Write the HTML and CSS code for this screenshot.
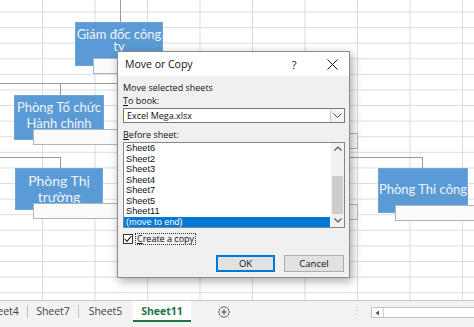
FILE: index.html
```html
<!DOCTYPE html>
<html lang="vi">
<head>
    <meta charset="UTF-8">
    <meta name="viewport" content="width=device-width, initial-scale=1.0">
    <title>Move or Copy</title>
    <link rel="stylesheet" href="styles.css">
</head>
<body>

<!-- Worksheet with the org chart -->
<div class="sheet">
    <div class="wire wire-top"></div>
    <div class="wire wire-row1"></div>
    <div class="wire wire-drop1"></div>
    <div class="wire wire-row2"></div>
    <div class="wire wire-drop2"></div>
    <div class="wire wire-row2-right"></div>
    <div class="wire wire-drop2-right"></div>

    <div class="node node-ceo">Giám đốc công ty</div>
    <div class="tag tag-ceo"></div>

    <div class="node node-admin">Phòng Tổ chức Hành chính</div>
    <div class="tag tag-admin"></div>

    <div class="node node-market">Phòng Thị trường</div>
    <div class="tag tag-market"></div>

    <div class="tag tag-mid1"></div>
    <div class="tag tag-mid2"></div>

    <div class="node node-build">Phòng Thi công</div>
    <div class="tag tag-build"></div>
</div>

<!-- Sheet tabs -->
<div class="tabbar">
    <div class="tab tab-cut">Sheet4</div>
    <span class="sep"></span>
    <div class="tab">Sheet7</div>
    <span class="sep"></span>
    <div class="tab tab-wide">Sheet5</div>
    <div class="tab tab-active">Sheet11</div>
    <div class="add-sheet">
        <svg width="12" height="12" viewBox="0 0 12 12">
            <circle cx="6" cy="6" r="5.2" fill="none" stroke="#666" stroke-width="1"/>
            <path d="M6 3.2v5.6M3.2 6h5.6" stroke="#555" stroke-width="1.2"/>
        </svg>
    </div>
    <div class="grip">&#8942;</div>
    <div class="hscroll">
        <span class="hscroll-arrow">
            <svg width="5" height="6" viewBox="0 0 5 6"><path d="M4 0.5L0.5 3L4 5.5z" fill="#555"/></svg>
        </span>
    </div>
</div>

<!-- Move or Copy dialog -->
<div class="dialog">
    <div class="dlg-title">
        <span class="dlg-caption">Move or Copy</span>
        <span class="dlg-help">?</span>
        <span class="dlg-close">
            <svg width="11" height="11" viewBox="0 0 11 11"><path d="M0.5 0.5L10.5 10.5M10.5 0.5L0.5 10.5" stroke="#111" stroke-width="1"/></svg>
        </span>
    </div>

    <div class="dlg-body">
        <div class="label">Move selected sheets</div>
        <div class="label"><u>T</u>o book:</div>
        <div class="combo">
            <span class="combo-text">Excel Mega.xlsx</span>
            <span class="combo-btn">
                <svg width="9" height="5" viewBox="0 0 9 5"><path d="M0.5 0.5L4.5 4.5L8.5 0.5" fill="none" stroke="#444" stroke-width="1"/></svg>
            </span>
        </div>
        <div class="label label-gap"><u>B</u>efore sheet:</div>
        <div class="listbox">
            <ul class="items">
                <li>Sheet6</li>
                <li>Sheet2</li>
                <li>Sheet3</li>
                <li>Sheet4</li>
                <li>Sheet7</li>
                <li>Sheet5</li>
                <li>Sheet11</li>
                <li class="selected">(move to end)</li>
            </ul>
            <div class="vscroll">
                <span class="vscroll-arrow">
                    <svg width="8" height="5" viewBox="0 0 8 5"><path d="M0.5 4.5L4 1L7.5 4.5" fill="none" stroke="#555" stroke-width="1.2"/></svg>
                </span>
                <span class="vscroll-thumb"></span>
                <span class="vscroll-arrow vscroll-down">
                    <svg width="8" height="5" viewBox="0 0 8 5"><path d="M0.5 0.5L4 4L7.5 0.5" fill="none" stroke="#555" stroke-width="1.2"/></svg>
                </span>
            </div>
        </div>
        <div class="check-row">
            <span class="checkbox">
                <svg width="8" height="8" viewBox="0 0 8 8"><path d="M0.8 4.2L3 6.4L7.3 1.2" fill="none" stroke="#222" stroke-width="1.1"/></svg>
            </span>
            <span class="check-label"><u>C</u>reate a copy</span>
        </div>
        <div class="buttons">
            <button class="btn btn-default">OK</button>
            <button class="btn">Cancel</button>
        </div>
    </div>
</div>

</body>
</html>
```
FILE: styles.css
```css
body {
    margin: 0;
    width: 474px;
    height: 327px;
    overflow: hidden;
    position: relative;
    background-color: #fff;
    font-family: "Open Sans", "Noto Sans", sans-serif;
}

/* Worksheet grid */
.sheet {
    height: 300px;
    position: relative;
    overflow: hidden;
    background-color: #fff;
    background-image:
        linear-gradient(to right, #dcdcdc 1px, transparent 1px),
        linear-gradient(to bottom, #dcdcdc 1px, transparent 1px);
    background-size: 52.5px 100%, 100% 15.6px;
    background-position: 42px 0, 0 11.5px;
}

/* Org chart connectors */
.wire {
    position: absolute;
    background-color: #9a9a9a;
}

.wire-top { left: 120px; top: 0; width: 1px; height: 22px; }
.wire-row1 { left: 0; top: 83px; width: 130px; height: 1px; }
.wire-drop1 { left: 60px; top: 83px; width: 1px; height: 12px; }
.wire-row2 { left: 0; top: 157px; width: 61px; height: 1px; }
.wire-drop2 { left: 60px; top: 157px; width: 1px; height: 11px; }
.wire-row2-right { left: 340px; top: 157px; width: 83px; height: 1px; }
.wire-drop2-right { left: 422px; top: 157px; width: 1px; height: 11px; }

/* Org chart boxes */
.node {
    position: absolute;
    box-sizing: border-box;
    background-color: #5b9bd5;
    border: 1px solid #6ea6da;
    color: #eef4fb;
    font-family: Lato, "Noto Sans", sans-serif;
    text-align: center;
    display: flex;
    justify-content: center;
}

.node-ceo {
    left: 75px;
    top: 22px;
    width: 88px;
    height: 44px;
    font-size: 13px;
    line-height: 12px;
    padding: 5px 0 0;
}

.node-admin {
    left: 14px;
    top: 95px;
    width: 90px;
    height: 45px;
    font-size: 13px;
    line-height: 16px;
    padding: 3px 0 0;
}

.node-market {
    left: 15px;
    top: 168px;
    width: 88px;
    height: 42px;
    font-size: 14px;
    line-height: 16px;
    padding: 4px 8px 0;
}

.node-build {
    left: 378px;
    top: 168px;
    width: 90px;
    height: 45px;
    font-size: 13px;
    line-height: 16px;
    padding: 12px 0 0;
    white-space: nowrap;
}

/* White text panes attached to boxes */
.tag {
    position: absolute;
    background-color: #fbfbfb;
    border: 1px solid #a9b6c3;
}

.tag-ceo { left: 93px; top: 58px; width: 40px; height: 14px; }
.tag-admin { left: 33px; top: 129px; width: 90px; height: 14px; }
.tag-market { left: 33px; top: 203px; width: 90px; height: 14px; }
.tag-mid1 { left: 300px; top: 133px; width: 56px; height: 14px; }
.tag-mid2 { left: 300px; top: 204px; width: 56px; height: 14px; }
.tag-build { left: 395px; top: 205px; width: 90px; height: 14px; }

/* Sheet tabs */
.tabbar {
    height: 26px;
    border-top: 1px solid #c8c8c8;
    background-color: #f2f2f2;
    display: flex;
    align-items: flex-start;
    font-size: 10.5px;
    color: #444;
    overflow: hidden;
}

.tab {
    height: 19px;
    width: 50px;
    flex-shrink: 0;
    display: flex;
    align-items: center;
    justify-content: center;
}

.tab-cut {
    margin-left: -23px;
}

.tab-wide {
    width: 53px;
}

.sep {
    width: 1px;
    height: 13px;
    margin-top: 4px;
    background-color: #c2c2c2;
    flex-shrink: 0;
}

.tab-active {
    width: 58px;
    margin-left: 1px;
    background-color: #fff;
    border-bottom: 2px solid #217346;
    color: #217346;
    font-weight: bold;
}

.add-sheet {
    margin-left: 27px;
    margin-top: 5px;
    width: 12px;
    height: 12px;
    display: flex;
}

.grip {
    margin-left: 121px;
    margin-top: 2px;
    color: #b8b8b8;
    font-size: 11px;
    line-height: 15px;
}

.hscroll {
    margin-left: 9px;
    margin-top: 6px;
    height: 11px;
    flex: 1;
    margin-right: -2px;
    box-sizing: border-box;
    border: 1px solid #c4c4c4;
    background-color: #fff;
    display: flex;
}

.hscroll-arrow {
    width: 11px;
    border-right: 1px solid #d0d0d0;
    display: flex;
    align-items: center;
    justify-content: center;
}

/* Dialog */
.dialog {
    position: absolute;
    left: 117px;
    top: 51px;
    width: 231px;
    border: 1px solid #8c8c8c;
    background-color: #f0f0f0;
    box-shadow: 2px 3px 9px rgba(0, 0, 0, 0.35);
    font-size: 9px;
    color: #111;
}

.dlg-title {
    height: 24px;
    background-color: #fff;
    display: flex;
    align-items: center;
    padding-left: 7px;
}

.dlg-caption {
    font-size: 10.5px;
    flex: 1;
}

.dlg-help {
    width: 20px;
    text-align: center;
    font-size: 11px;
    margin-right: 13px;
}

.dlg-close {
    width: 30px;
    display: flex;
    justify-content: center;
    margin-right: 2px;
}

.dlg-body {
    padding: 5px 4px 5px 5px;
}

.label {
    line-height: 13px;
    height: 13px;
}

.label-gap {
    margin-top: 5px;
}

.combo {
    margin-top: 1px;
    height: 15px;
    box-sizing: border-box;
    border: 1px solid #7a7a7a;
    background-color: #fff;
    display: flex;
    align-items: center;
}

.combo-text {
    flex: 1;
    padding-left: 3px;
}

.combo-btn {
    width: 13px;
    height: 100%;
    border-left: 1px solid #c8c8c8;
    background-color: #f4f4f4;
    display: flex;
    align-items: center;
    justify-content: center;
}

.listbox {
    margin-top: 1px;
    height: 86px;
    box-sizing: border-box;
    border: 1px solid #828790;
    background-color: #fff;
    display: flex;
}

.items {
    list-style: none;
    margin: 0;
    padding: 0 1px 0 0;
    flex: 1;
    font-family: "Liberation Sans", Arial, sans-serif;
    font-size: 9.2px;
}

.items li {
    height: 10.5px;
    line-height: 10.5px;
    padding-left: 2px;
}

.items li.selected {
    background-color: #0078d7;
    color: #fff;
}

.vscroll {
    width: 13px;
    background-color: #f0f0f0;
    display: flex;
    flex-direction: column;
    align-items: center;
}

.vscroll-arrow {
    height: 11px;
    display: flex;
    align-items: center;
}

.vscroll-thumb {
    margin-top: 22px;
    width: 11px;
    height: 38px;
    background-color: #cdcdcd;
}

.vscroll-down {
    margin-top: auto;
    margin-bottom: 1px;
}

.check-row {
    margin-top: 5px;
    height: 11px;
    display: flex;
    align-items: center;
}

.checkbox {
    width: 10px;
    height: 10px;
    box-sizing: border-box;
    border: 1px solid #333;
    background-color: #fff;
    display: flex;
    align-items: center;
    justify-content: center;
}

.check-label {
    margin-left: 2px;
    padding: 0 1px;
    line-height: 10px;
    border: 1px dotted #333;
}

.buttons {
    margin-top: 11px;
    display: flex;
    justify-content: flex-end;
    gap: 9px;
    padding-right: 1px;
}

.btn {
    height: 17px;
    width: 60px;
    padding: 0;
    border: 1px solid #adadad;
    background-color: #e1e1e1;
    font-family: inherit;
    font-size: 9.5px;
    color: #111;
}

.btn-default {
    width: 59px;
    border: 2px solid #0078d7;
}
```
